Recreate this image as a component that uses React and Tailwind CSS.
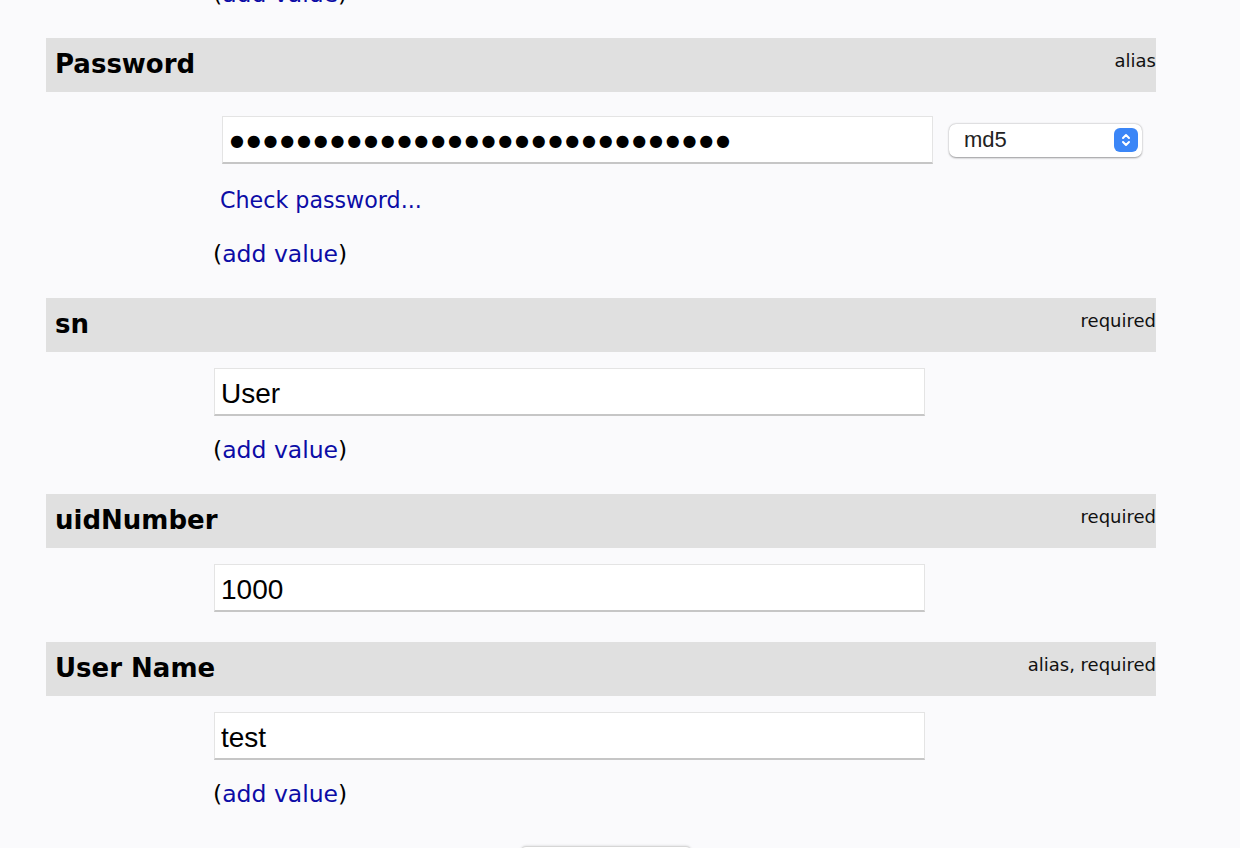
import React from 'react';

const verdana = { fontFamily: '"DejaVu Sans", Verdana, sans-serif' };
const helv = { fontFamily: '"Liberation Sans", Helvetica, Arial, sans-serif' };

const AddValue = ({ className = '' }) => (
  <div className={`ml-[167px] h-[28px] leading-[28px] text-[23.5px] text-black ${className}`} style={verdana}>
    (<a href="#" className="text-[#0c0ca6]">add value</a>)
  </div>
);

const Header = ({ title, note }) => (
  <div className="flex justify-between items-start h-[54px] bg-[#e0e0e0] pl-[9px]" style={verdana}>
    <h3 className="pt-[11px] text-[26px] leading-[30px] font-bold text-black">{title}</h3>
    <span className="pt-[13px] text-[18px] leading-[20px] text-[#111]">{note}</span>
  </div>
);

const TextInput = ({ value, className = '' }) => (
  <input
    readOnly
    value={value}
    className={`block w-[711px] h-[48px] bg-white border border-[#e4e4e4] border-b-2 border-b-[#c6c6c6] px-[6px] pt-[5px] text-[28px] text-black outline-none ${className}`}
    style={helv}
  />
);

const Md5Select = () => (
  <div className="flex items-center justify-between w-[193px] h-[33px] bg-white rounded-[7px] shadow-[0_0.5px_2px_rgba(0,0,0,0.4)] pl-[15px] pr-[4px]" style={helv}>
    <span className="text-[22px] leading-none text-[#222]">md5</span>
    <span className="flex items-center justify-center w-[24px] h-[24px] rounded-[6px] bg-[#3b86f7]">
      <svg width="12" height="16" viewBox="0 0 12 16" fill="none" stroke="white" strokeWidth="2" strokeLinecap="round" strokeLinejoin="round">
        <path d="M3 6 L6 3 L9 6" />
        <path d="M3 10 L6 13 L9 10" />
      </svg>
    </span>
  </div>
);

export default function App() {
  return (
    <div className="h-screen overflow-hidden bg-[#fafafc]">
      <div className="ml-[46px] w-[1110px] -mt-[20px]">
        <AddValue />

        <div className="mt-[30px]">
          <Header title="Password" note="alias" />
        </div>
        <div className="mt-[24px] ml-[176px] flex items-center gap-[16px]">
          <input
            readOnly
            value={'●'.repeat(30)}
            className="block w-[711px] h-[48px] bg-white border border-[#e4e4e4] border-b-2 border-b-[#c6c6c6] px-[7px] pt-[2px] text-[16px] tracking-[2.8px] text-black outline-none"
            style={verdana}
          />
          <Md5Select />
        </div>
        <div className="mt-[22px] ml-[174px] h-[28px] leading-[28px] text-[22.2px]" style={verdana}>
          <a href="#" className="text-[#0c0ca6]">Check password...</a>
        </div>
        <AddValue className="mt-[26px]" />

        <div className="mt-[30px]">
          <Header title="sn" note="required" />
        </div>
        <TextInput value="User" className="mt-[16px] ml-[168px]" />
        <AddValue className="mt-[20px]" />

        <div className="mt-[30px]">
          <Header title="uidNumber" note="required" />
        </div>
        <TextInput value="1000" className="mt-[16px] ml-[168px]" />

        <div className="mt-[30px]">
          <Header title="User Name" note="alias, required" />
        </div>
        <TextInput value="test" className="mt-[16px] ml-[168px]" />
        <AddValue className="mt-[20px]" />

        <div className="mt-[38px] ml-[474px] w-[172px] h-[30px] bg-white rounded-[6px] border border-[#d6d6d6] shadow-[0_-1px_2px_rgba(0,0,0,0.08)]" />
      </div>
    </div>
  );
}
